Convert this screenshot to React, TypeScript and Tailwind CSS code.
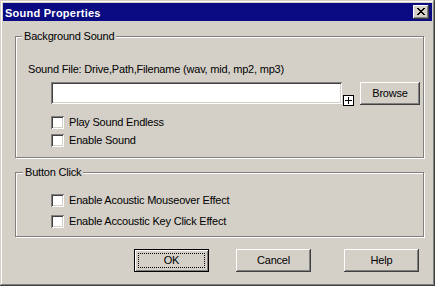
import React from "react";

const raised =
  "shadow-[inset_-1px_-1px_0_#404040,inset_1px_1px_0_#ffffff,inset_-2px_-2px_0_#808080,inset_2px_2px_0_#d4d0c8]";
const sunken =
  "shadow-[inset_1px_1px_0_#808080,inset_-1px_-1px_0_#ffffff,inset_2px_2px_0_#404040,inset_-2px_-2px_0_#d4d0c8]";

function CloseX() {
  const px: [number, number][] = [
    [0, 0], [1, 0], [6, 0], [7, 0],
    [1, 1], [2, 1], [5, 1], [6, 1],
    [2, 2], [3, 2], [4, 2], [5, 2],
    [3, 3], [4, 3],
    [2, 4], [3, 4], [4, 4], [5, 4],
    [1, 5], [2, 5], [5, 5], [6, 5],
    [0, 6], [1, 6], [6, 6], [7, 6],
  ];
  return (
    <svg width="8" height="7" viewBox="0 0 8 7" shapeRendering="crispEdges">
      {px.map(([x, y]) => (
        <rect key={`${x}-${y}`} x={x} y={y} width="1" height="1" fill="#000" />
      ))}
    </svg>
  );
}

function Checkbox({ label, className = "" }: { label: string; className?: string }) {
  return (
    <div className={`flex items-start ${className}`}>
      <div className={`w-[13px] h-[13px] bg-white ml-[35px] ${sunken}`} />
      <span className="ml-[5px] leading-[13px] h-[13px] whitespace-nowrap">{label}</span>
    </div>
  );
}

function Button({ label, isDefault = false, className = "" }: { label: string; isDefault?: boolean; className?: string }) {
  if (isDefault) {
    return (
      <div
        className={`w-[75px] h-[23px] border border-black flex items-center justify-center shadow-[inset_1px_1px_0_#ffffff,inset_-1px_-1px_0_#808080] relative ${className}`}
      >
        <div className="absolute left-[3px] top-[3px] right-[3px] bottom-[3px] border border-dotted border-black" />
        <span className="leading-[13px]">{label}</span>
      </div>
    );
  }
  return (
    <div className={`w-[75px] h-[23px] flex items-center justify-center ${raised} ${className}`}>
      <span className="leading-[13px]">{label}</span>
    </div>
  );
}

export default function App() {
  return (
    <div
      className={`w-[435px] h-[286px] bg-[#d4d0c8] p-[3px] text-black text-[11px] tracking-[-0.2px] font-['Liberation_Sans',Arial,sans-serif] shadow-[inset_-1px_-1px_0_#404040,inset_1px_1px_0_#d4d0c8,inset_-2px_-2px_0_#808080,inset_2px_2px_0_#ffffff] overflow-hidden`}
    >
      {/* Title bar */}
      <div className="h-[18px] bg-[#0a0a82] flex items-center justify-between pl-[2px] pr-[3px]">
        <span className="text-white font-bold text-[11px] tracking-[0.25px] leading-[13px] mt-[2px] whitespace-nowrap">
          Sound Properties
        </span>
        <div className={`w-[16px] h-[14px] bg-[#d4d0c8] flex items-start justify-start pl-[4px] pt-[3px] ${raised}`}>
          <CloseX />
        </div>
      </div>

      {/* Group 1 */}
      <div className="relative ml-[12px] mt-[15px] w-[409px] h-[122px] border border-[#808080] shadow-[1px_1px_0_#ffffff,inset_1px_1px_0_#ffffff]">
        <span className="absolute left-[6px] top-[-7px] px-[2px] bg-[#d4d0c8] leading-[13px] whitespace-nowrap">
          Background Sound
        </span>
        <div className="ml-[12px] mt-[26px] leading-[13px] h-[13px] whitespace-nowrap">
          Sound File: Drive,Path,Filename (wav, mid, mp2, mp3)
        </div>
        <div className="flex items-start mt-[6px]">
          <div className={`ml-[35px] w-[291px] h-[22px] bg-white ${sunken}`} />
          <div className="ml-[1px] mt-[13px] w-[11px] h-[11px] border border-black bg-white flex items-center justify-center">
            <svg width="7" height="7" viewBox="0 0 7 7" shapeRendering="crispEdges">
              <rect x="0" y="3" width="7" height="1" fill="#000" />
              <rect x="3" y="0" width="1" height="7" fill="#000" />
            </svg>
          </div>
          <div className={`ml-[6px] w-[60px] h-[23px] flex items-center justify-center ${raised}`}>
            <span className="leading-[13px]">Browse</span>
          </div>
        </div>
        <Checkbox label="Play Sound Endless" className="mt-[10px]" />
        <Checkbox label="Enable Sound" className="mt-[5px]" />
      </div>

      {/* Group 2 */}
      <div className="relative ml-[12px] mt-[14px] w-[409px] h-[65px] border border-[#808080] shadow-[1px_1px_0_#ffffff,inset_1px_1px_0_#ffffff]">
        <span className="absolute left-[7px] top-[-7px] px-[2px] bg-[#d4d0c8] leading-[13px] whitespace-nowrap">
          Button Click
        </span>
        <Checkbox label="Enable Acoustic Mouseover Effect" className="mt-[21px]" />
        <Checkbox label="Enable Accoustic Key Click Effect" className="mt-[8px]" />
      </div>

      {/* Buttons */}
      <div className="flex mt-[12px]">
        <Button label="OK" isDefault className="ml-[131px]" />
        <Button label="Cancel" className="ml-[27px]" />
        <Button label="Help" className="ml-[33px]" />
      </div>
    </div>
  );
}
